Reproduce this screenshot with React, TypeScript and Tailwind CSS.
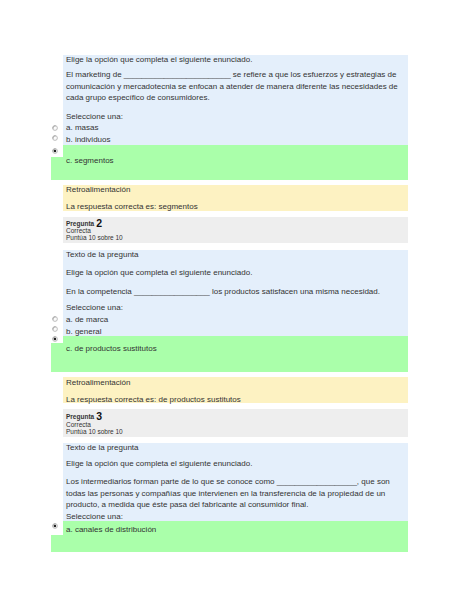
import type { ReactNode } from "react";

const Radio = ({ checked = false }: { checked?: boolean }) => (
    <svg width="6" height="6" viewBox="0 0 6 6" className="block">
        <circle cx="3" cy="3" r="2.4" fill="#fbfbfb" stroke="#a3a3a3" strokeWidth="0.7" />
        <path d="M1.2 3.6 A2.1 2.1 0 0 1 3.6 1" fill="none" stroke="#7a7a7a" strokeWidth="0.6" />
        {checked && <circle cx="3" cy="3" r="1.2" fill="#1e1e1e" />}
    </svg>
);

interface OptProps {
    row: string;
    radio: string;
    text: string;
    children: ReactNode;
}

// opcion sin marcar, fila azul con el radio a la izquierda
const Option = ({ row, radio, text, children }: OptProps) => (
    <div className={`flex ${row}`}>
        <div className={`w-[12px] pl-[1px] ${radio}`}>
            <Radio />
        </div>
        <div className={`flex-1 bg-[#e4effb] pl-[3px] ${text}`}>{children}</div>
    </div>
);

interface CorrectProps {
    row: string;
    notch: string;
    radio: string;
    text: string;
    children: ReactNode;
}

// opcion marcada y correcta (verde)
const Correct = ({ row, notch, radio, text, children }: CorrectProps) => (
    <div className={`flex bg-[#aaffaa] ${row}`}>
        <div className="flex w-[12px] flex-col">
            <div className={`bg-white pl-[1px] ${notch} ${radio}`}>
                <Radio checked />
            </div>
        </div>
        <div className={`flex-1 pl-[3px] leading-[11px] ${text}`}>{children}</div>
    </div>
);

const Feedback = ({ answer, first, second }: { answer: string; first: string; second: string }) => (
    <div className="ml-[12px] h-[26px] bg-[#fdf2c2] pl-[3px]">
        <p className={first}>Retroalimentación</p>
        <p className={second}>La respuesta correcta es: {answer}</p>
    </div>
);

const Info = ({ n, box, lines }: { n: number; box: string; lines: string }) => (
    <div className={`ml-[12px] bg-[#eeeeee] pl-[3px] text-[6.5px] ${box}`}>
        <p className="flex h-[8px] items-end leading-[8px]">
            <span className="font-bold">Pregunta</span>
            <span className="ml-[2px] text-[10.5px] font-semibold leading-[9px] text-[#111]">{n}</span>
        </p>
        <p className={lines}>Correcta</p>
        <p className={lines}>Puntúa 10 sobre 10</p>
    </div>
);

export default function App() {
    return (
        <div
            className="h-[613px] w-[474px] overflow-hidden bg-white pl-[51px] pt-[55px] text-[8px] text-[#333]"
            style={{ fontFamily: '"Liberation Sans", Arial, sans-serif' }}
        >
            <div className="flex w-[357px] flex-col">
                {/* Pregunta 1 */}
                <div className="ml-[12px] bg-[#e4effb] pl-[3px]">
                    <p className="leading-[10px]">Elige la opción que completa el siguiente enunciado.</p>
                    <p className="mt-[4.25px] leading-[11.5px] whitespace-nowrap">
                        El marketing de ________________________ se refiere a que los esfuerzos y estrategias de
                        <br />
                        comunicación y mercadotecnia se enfocan a atender de manera diferente las necesidades de
                        <br />
                        cada grupo específico de consumidores.
                    </p>
                    <p className="mt-[6.75px] leading-[11px]">Seleccione una:</p>
                </div>
                <Option row="h-[12px]" radio="pt-[3px]" text="leading-[12px]">
                    a. masas
                </Option>
                <Option row="h-[11.5px]" radio="pt-[1.5px]" text="leading-[11.5px]">
                    b. individuos
                </Option>
                <Correct row="h-[35px]" notch="h-[12px]" radio="pt-[2.5px]" text="pt-[9.5px]">
                    c. segmentos
                </Correct>

                <div className="mt-[5px]">
                    <Feedback answer="segmentos" first="leading-[10px]" second="mt-[5.5px] leading-[11px]" />
                </div>

                <div className="mt-[6px]">
                    <Info n={2} box="h-[26px] pt-[3px]" lines="leading-[6.75px]" />
                </div>

                {/* Pregunta 2 */}
                <div className="ml-[12px] mt-[7px] bg-[#e4effb] pl-[3px]">
                    <p className="leading-[10px]">Texto de la pregunta</p>
                    <p className="mt-[6.5px] leading-[11px]">Elige la opción que completa el siguiente enunciado.</p>
                    <p className="mt-[8px] leading-[11px]">
                        En la competencia _________________ los productos satisfacen una misma necesidad.
                    </p>
                    <p className="mt-[5px] leading-[11px]">Seleccione una:</p>
                </div>
                <Option row="h-[13px]" radio="pt-[3px]" text="leading-[13px]">
                    a. de marca
                </Option>
                <Option row="h-[10.5px]" radio="pt-[0px]" text="leading-[12px]">
                    b. general
                </Option>
                <Correct row="h-[36px]" notch="h-[7px]" radio="pt-[0px]" text="pt-[6.75px]">
                    c. de productos sustitutos
                </Correct>

                <div className="mt-[5px]">
                    <Feedback
                        answer="de productos sustitutos"
                        first="leading-[12px]"
                        second="mt-[4.5px] leading-[11px]"
                    />
                </div>

                <div className="mt-[6px]">
                    <Info n={3} box="h-[28px] pt-[4px]" lines="leading-[7px]" />
                </div>

                {/* Pregunta 3 */}
                <div className="ml-[12px] mt-[6px] bg-[#e4effb] pl-[3px]">
                    <p className="leading-[10px]">Texto de la pregunta</p>
                    <p className="mt-[4.5px] leading-[11px]">Elige la opción que completa el siguiente enunciado.</p>
                    <p className="mt-[7.75px] leading-[11.5px] whitespace-nowrap">
                        Los intermediarios forman parte de lo que se conoce como __________________, que son
                        <br />
                        todas las personas y compañías que intervienen en la transferencia de la propiedad de un
                        <br />
                        producto, a medida que éste pasa del fabricante al consumidor final.
                    </p>
                    <p className="mt-[1px] leading-[9px]">Seleccione una:</p>
                </div>
                <Correct row="h-[31px]" notch="h-[14px]" radio="pt-[2.5px]" text="pt-[3.5px]">
                    a. canales de distribución
                </Correct>
            </div>
        </div>
    );
}
